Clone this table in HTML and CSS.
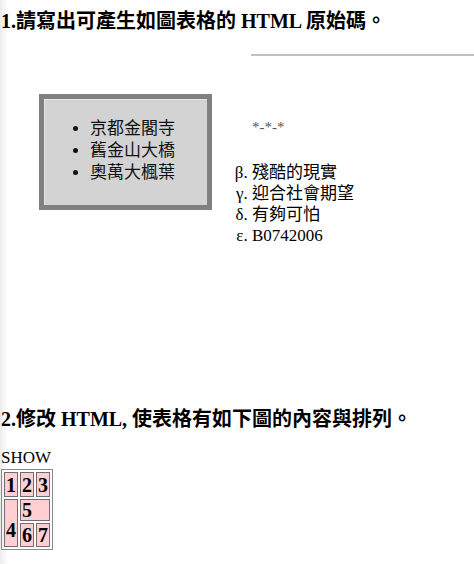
FILE: index.html
```html
<!DOCTYPE html>
<html lang="zh-Hant">
<head>
<meta charset="utf-8">
<title>HTML 練習</title>
<link rel="stylesheet" href="styles.css">
</head>
<body>
<h3 class="q q1">1.請寫出可產生如圖表格的 HTML 原始碼。</h3>
<div class="rule"></div>
<div class="demo">
  <div class="box">
    <ul class="places">
      <li>京都金閣寺</li>
      <li>舊金山大橋</li>
      <li>奧萬大楓葉</li>
    </ul>
  </div>
  <div class="side">
    <div class="stars">*-*-*</div>
    <ol class="greek" start="2">
      <li>殘酷的現實</li>
      <li>迎合社會期望</li>
      <li>有夠可怕</li>
      <li>B0742006</li>
    </ol>
  </div>
</div>
<h3 class="q q2">2.修改 HTML, 使表格有如下圖的內容與排列。</h3>
<div class="show">SHOW</div>
<table class="grid">
  <tr><td class="c">1</td><td class="c">2</td><td class="c">3</td></tr>
  <tr><td class="c four" rowspan="2">4</td><td class="c five" colspan="2">5</td></tr>
  <tr><td class="c r3">6</td><td class="c r3">7</td></tr>
</table>
</body>
</html>
```
FILE: styles.css
```css
html, body {
  margin: 0;
  padding: 0;
}
body {
  padding-left: 1px;
  font-family: "Liberation Serif", "Noto Sans CJK TC", serif;
  font-size: 17px;
  color: #000;
  background: linear-gradient(to right, #ebebeb 0, #f6f6f6 4px, #fff 8px) no-repeat;
  background-color: #fff;
  min-height: 564px;
}
.q {
  font-size: 20px;
  font-weight: bold;
  line-height: 26px;
  margin: 0;
}
.q1 {
  margin-top: 8px;
}
.rule {
  margin: 20px 0 0 auto;
  width: 223px;
  height: 2px;
  background: #c0c0c0;
}
.demo {
  display: flex;
  align-items: flex-start;
  margin-top: 38px;
}
.box {
  margin-left: 38px;
  width: 163px;
  border: 5px solid #808080;
  background: #d3d3d3;
  box-shadow: inset 1px 1px 0 #e6e6e6;
  padding: 19px 0 21px;
}
.places {
  margin: 0;
  padding-left: 46px;
  font-size: 17px;
  line-height: 22px;
  color: #111;
}
.side {
  padding-top: 23px;
}
.stars {
  padding-left: 40px;
  font-size: 15px;
  line-height: 21px;
  color: #555;
}
.greek {
  list-style-type: lower-greek;
  margin: 24px 0 0;
  padding-left: 40px;
  font-size: 17px;
  line-height: 21px;
}
.q2 {
  margin-top: 160px;
}
.show {
  margin-top: 16px;
  font-size: 17px;
  line-height: 20px;
}
.grid {
  margin-top: 1px;
  border: 1px solid #8a8a8a;
  border-spacing: 2px;
  font-size: 20px;
  font-weight: bold;
}
.c {
  background: #ffcfd2;
  border: 1px solid #6e6e6e;
  padding: 0 1px;
  width: 10px;
  height: 23px;
  line-height: 20px;
  text-align: left;
  vertical-align: middle;
}
.five {
  height: 20px;
}
.r3 {
  height: 22px;
}
.four {
  vertical-align: bottom;
  padding-bottom: 6px;
}
```
